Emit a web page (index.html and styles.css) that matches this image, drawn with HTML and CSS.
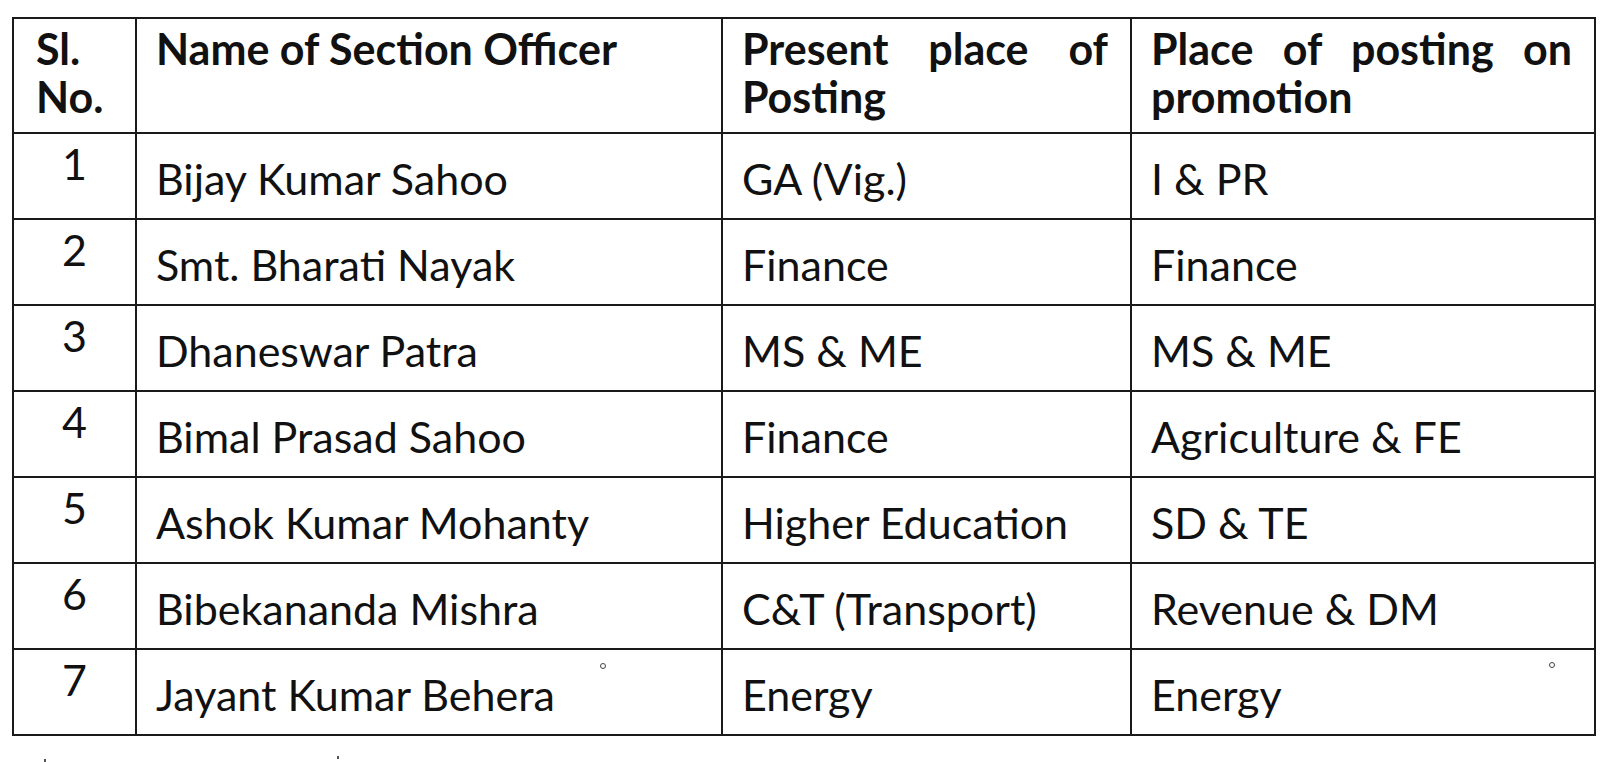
FILE: index.html
```html
<!DOCTYPE html>
<html>
<head>
<meta charset="utf-8">
<link rel="stylesheet" href="styles.css">
</head>
<body>
<div class="page">
<table class="posting">
  <colgroup>
    <col class="c-no"><col class="c-name"><col class="c-present"><col class="c-promo">
  </colgroup>
  <thead>
    <tr>
      <th class="no-h">Sl.<br>No.</th>
      <th>Name of Section Officer</th>
      <th class="just">Present place of Posting</th>
      <th class="just">Place of posting on promotion</th>
    </tr>
  </thead>
  <tbody>
    <tr><td class="num">1</td><td>Bijay Kumar Sahoo</td><td>GA (Vig.)</td><td>I &amp; PR</td></tr>
    <tr><td class="num">2</td><td>Smt. Bharati Nayak</td><td>Finance</td><td>Finance</td></tr>
    <tr><td class="num">3</td><td>Dhaneswar Patra</td><td>MS &amp; ME</td><td>MS &amp; ME</td></tr>
    <tr><td class="num">4</td><td>Bimal Prasad Sahoo</td><td>Finance</td><td>Agriculture &amp; FE</td></tr>
    <tr><td class="num">5</td><td>Ashok Kumar Mohanty</td><td>Higher Education</td><td>SD &amp; TE</td></tr>
    <tr><td class="num">6</td><td>Bibekananda Mishra</td><td>C&amp;T (Transport)</td><td>Revenue &amp; DM</td></tr>
    <tr><td class="num">7</td><td>Jayant Kumar Behera</td><td>Energy</td><td>Energy</td></tr>
  </tbody>
</table>
<span class="speck s1"></span>
<span class="speck s2"></span>
<span class="dot d1"></span>
<span class="dot d2"></span>
</div>
</body>
</html>
```

FILE: styles.css
```css
html, body {
  margin: 0;
  padding: 0;
  background: #ffffff;
}
.page {
  position: relative;
  width: 1600px;
  height: 762px;
  padding: 17px 0 0 12px;
  box-sizing: border-box;
  overflow: hidden;
}
.posting {
  border-collapse: collapse;
  table-layout: fixed;
  width: 1582px;
  font-family: Lato, "Open Sans", sans-serif;
  color: #111;
}
.c-no { width: 123px; }
.c-name { width: 586px; }
.c-present { width: 409px; }
.c-promo { width: 464px; }
.posting th, .posting td {
  border: 2px solid #1a1a1a;
  vertical-align: top;
  text-align: left;
  padding: 0 22px 0 19px;
}
.posting th {
  height: 115px;
  box-sizing: border-box;
  font-weight: 700;
  font-size: 43px;
  line-height: 48px;
  padding-top: 6px;
}
.posting th.no-h {
  padding-left: 22px;
}
.posting th.just {
  text-align: justify;
  text-align-last: left;
}
.posting td {
  height: 86px;
  box-sizing: border-box;
  font-size: 43px;
  line-height: 52px;
  padding-top: 19px;
  font-weight: 400;
}
.posting td.num {
  text-align: center;
  padding-left: 0;
  padding-right: 0;
  padding-top: 4px;
}
.speck {
  position: absolute;
  width: 2px;
  height: 3px;
  background: #555;
}
.s1 { left: 44px; top: 759px; }
.s2 { left: 337px; top: 756px; }
.dot {
  position: absolute;
  width: 6px;
  height: 6px;
  border: 1.5px solid #444;
  border-radius: 50%;
  box-sizing: border-box;
}
.d1 { left: 600px; top: 663px; }
.d2 { left: 1549px; top: 662px; }
```
